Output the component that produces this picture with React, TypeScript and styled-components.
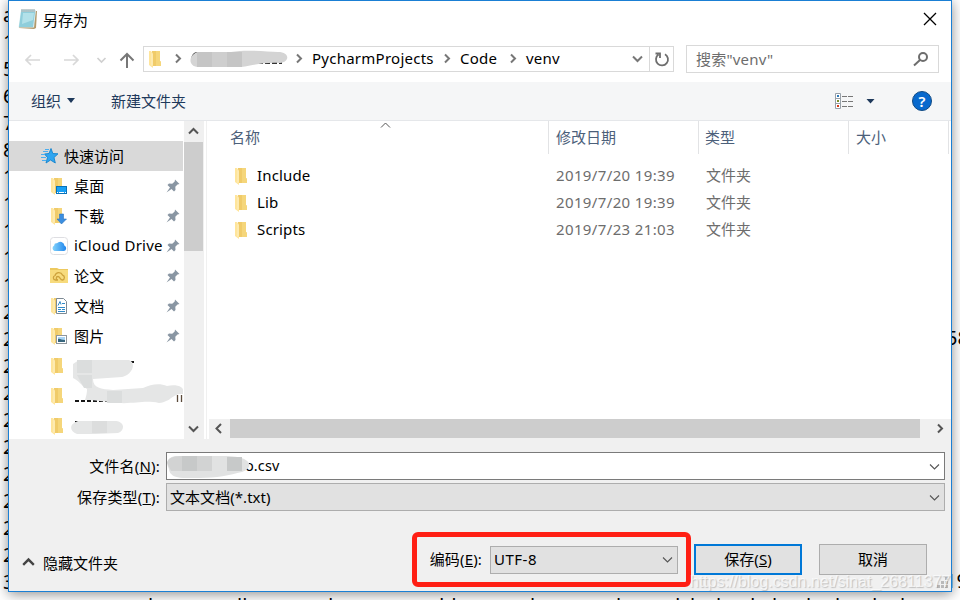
import React from "react";
import styled, { createGlobalStyle } from "styled-components";

const GlobalStyle = createGlobalStyle`
  * { box-sizing: border-box; }
  html, body { margin: 0; padding: 0; overflow: hidden; }
  body { font-family: "Noto Sans", "Noto Sans CJK SC", sans-serif; font-size: 15px; color: #000; }
  svg { display: block; flex: none; }
`;

const Desktop = styled.div`
  position: relative;
  width: 960px;
  height: 600px;
  padding-left: 8px;
  overflow: hidden;
  background: #fff;
`;

const Editor = styled.div`
  position: absolute;
  inset: 0;
  overflow: hidden;
  font: 20px/27px "Noto Sans", sans-serif;
`;

const EditorText = styled.span<{ $x: number; $y: number }>`
  position: absolute;
  left: ${(p) => p.$x}px;
  top: ${(p) => p.$y}px;
  white-space: pre;
`;

const Dialog = styled.main`
  position: relative;
  display: flex;
  flex-direction: column;
  width: 944px;
  height: 592px;
  border: 1px solid #1a7fd4;
  background: #f0f0f0;
  box-shadow: 0 2px 12px rgba(0, 0, 0, 0.45);
`;

const TitleBar = styled.header`
  display: flex;
  align-items: center;
  height: 36px;
  padding: 0 14px 0 9px;
  gap: 5px;
  background: #fff;
  & > svg:last-child { margin-left: auto; }
`;

const NavRow = styled.nav`
  display: flex;
  align-items: center;
  height: 45px;
  padding: 0 12px 1px 15px;
  background: #fff;
`;

const NavArrows = styled.div`
  display: flex;
  align-items: center;
  width: 119px;
`;

const AddressBar = styled.div`
  display: flex;
  align-items: center;
  width: 531px;
  height: 26px;
  margin-right: 12px;
  border: 1px solid #d9d9d9;
`;

const Crumbs = styled.div`
  display: flex;
  flex: 1;
  align-items: center;
  height: 100%;
  padding: 0 6px 1px 4px;
  & > svg:last-child { margin-left: auto; }
`;

const CrumbGap = styled.span<{ $w?: number }>`
  width: ${(p) => p.$w ?? 6}px;
`;

const Crumb = styled.span<{ $w: number }>`
  width: ${(p) => p.$w}px;
  margin-left: 7px;
  padding-bottom: 1px;
  white-space: nowrap;
  letter-spacing: 0.25px;
`;

const Refresh = styled.div`
  display: flex;
  align-items: center;
  justify-content: center;
  width: 24px;
  height: 100%;
  border-left: 1px solid #d9d9d9;
`;

const SearchBox = styled.div`
  display: flex;
  align-items: center;
  justify-content: space-between;
  width: 253px;
  height: 28px;
  padding: 0 9px 0 9px;
  border: 1px solid #d9d9d9;
  color: #6d6d6d;
`;

const SearchText = styled.span`
  padding-bottom: 2px;
  letter-spacing: 0.2px;
`;

const Toolbar = styled.div`
  display: flex;
  align-items: center;
  height: 39px;
  padding: 0 19px 0 22px;
  border-bottom: 1px solid #e5e7ea;
  background: #f5f6f7;
  color: #1e395b;
`;

const ToolItem = styled.span<{ $w: number }>`
  display: flex;
  align-items: center;
  gap: 6px;
  width: ${(p) => p.$w}px;
  padding-bottom: 2px;
  white-space: nowrap;
`;

const ToolIcons = styled.div`
  display: flex;
  align-items: center;
  margin-left: auto;
`;

const Browser = styled.section`
  display: flex;
  height: 318px;
  background: #fff;
`;

const Sidebar = styled.aside`
  width: 174px;
  height: 318px;
  padding-top: 20px;
  overflow: hidden;
`;

const SideItem = styled.div<{ $root?: boolean }>`
  display: flex;
  align-items: center;
  height: 30px;
  padding-left: ${(p) => (p.$root ? 31 : 41)}px;
  padding-right: 3px;
  background: ${(p) => (p.$root ? "#d9d9d9" : "transparent")};
  white-space: nowrap;
`;

const SideLabel = styled.span<{ $root?: boolean }>`
  flex: 1;
  margin-left: ${(p) => (p.$root ? 4 : 6)}px;
  padding-bottom: 2px;
  letter-spacing: ${(p) => (p.$root ? 0 : 0.25)}px;
`;

const VScroll = styled.div`
  display: flex;
  flex-direction: column;
  width: 20px;
  margin-left: 1px;
  background: #f0f0f0;
`;

const VArrow = styled.div`
  display: flex;
  align-items: center;
  justify-content: center;
  width: 19px;
  height: 21px;
`;

const VThumb = styled.div`
  width: 19px;
  height: 109px;
  margin-bottom: auto;
  background: #cdcdcd;
`;

const FilePane = styled.div`
  display: flex;
  flex: 1;
  flex-direction: column;
  margin-left: 2px;
  border-left: 1px solid #f0f0f0;
`;

const ColumnHeads = styled.div`
  display: flex;
  height: 33px;
  margin-bottom: 8px;
`;

const ColumnHead = styled.div<{ $w: number; $pad: number }>`
  position: relative;
  display: flex;
  align-items: center;
  width: ${(p) => p.$w}px;
  padding-left: ${(p) => p.$pad}px;
  padding-bottom: 2px;
  border-right: 1px solid #e2e3e5;
  color: #4c607a;
`;

const SortMark = styled.span`
  position: absolute;
  top: -1px;
  left: 173px;
`;

const FileRow = styled.div`
  display: grid;
  grid-template-columns: 50px 299px 150px 150px;
  align-items: center;
  height: 27px;
  color: #6d6d6d;
  & > svg { margin-left: 27px; }
  & > span { padding-bottom: 2px; }
`;

const FileName = styled.span`
  color: #000;
  letter-spacing: 0.15px;
`;

const FileDate = styled.span`
  letter-spacing: 0.37px;
`;

const HScroll = styled.div`
  display: flex;
  align-items: center;
  height: 20px;
  margin-top: auto;
  margin-left: 2px;
  padding: 0 0 1px 5px;
  background: #f0f0f0;
  & > svg:last-child { margin-left: 15px; }
`;

const HThumb = styled.div`
  width: 690px;
  height: 19px;
  margin-left: 5px;
  background: #cdcdcd;
`;

const Fields = styled.section`
  display: flex;
  flex-direction: column;
  gap: 3px;
  padding: 13px 6px 0 0;
`;

const Field = styled.div`
  display: flex;
  align-items: center;
`;

const FieldLabel = styled.label`
  width: 151px;
  margin-right: 6px;
  padding-bottom: 2px;
  text-align: right;
  letter-spacing: 0.2px;
`;

const Combo = styled.div<{ $w: number; $editable?: boolean }>`
  display: flex;
  align-items: center;
  justify-content: space-between;
  width: ${(p) => p.$w}px;
  height: 28px;
  padding: 0 4px 0 3px;
  border: 1px solid ${(p) => (p.$editable ? "#7a7a7a" : "#adadad")};
  background: ${(p) => (p.$editable ? "#fff" : "#e1e1e1")};
`;

const ComboText = styled.span`
  padding-bottom: 2px;
  letter-spacing: 0.05px;
`;

const UtfText = styled(ComboText)`
  letter-spacing: 0.5px;
`;

const FileField = styled.span`
  display: flex;
  align-items: center;
  margin-left: -3px;
  font-size: 14.5px;
`;

const FileSuffix = styled.span`
  margin-left: -5px;
  padding-bottom: 2px;
  letter-spacing: 0.1px;
`;

const NameSmudgeSvg = styled.svg`
  position: relative;
  z-index: 1;
`;

const Footer = styled.footer`
  display: flex;
  flex: 1;
  align-items: center;
  padding-top: 17px;
`;

const HideFolders = styled.div`
  display: flex;
  align-items: center;
  gap: 8px;
  width: 403px;
  padding: 5px 0 0 13px;
`;

const EncodingFrame = styled.div`
  display: flex;
  align-items: center;
  justify-content: flex-end;
  width: 279px;
  height: 55px;
  padding-right: 8px;
  border: 5px solid #ff1f14;
  border-radius: 6px;
`;

const EncodingLabel = styled.label`
  margin-right: 8px;
  padding-bottom: 2px;
  letter-spacing: 0.15px;
`;

const Button = styled.button<{ $primary?: boolean }>`
  width: 108px;
  height: 31px;
  margin-left: ${(p) => (p.$primary ? 3 : 17)}px;
  padding: 0 0 2px;
  border: ${(p) => (p.$primary ? "2px solid #0078d7" : "1px solid #adadad")};
  background: #e1e1e1;
  color: #000;
  font: inherit;
`;

const Watermark = styled.div`
  position: absolute;
  left: 690px;
  top: 572px;
  font: 16px/20px "Liberation Sans", sans-serif;
  color: rgba(255, 255, 255, 0.7);
  text-shadow: 1px 1px 1px rgba(120, 120, 120, 0.4);
  white-space: nowrap;
`;

const Grip = styled.svg`
  position: absolute;
  right: 3px;
  bottom: 2px;
`;

type Direction = "up" | "down" | "left" | "right";
const chevrons: Record<Direction, string> = {
  up: "M1 7.5 L5.5 3 L10 7.5",
  down: "M1 3.5 L5.5 8 L10 3.5",
  left: "M7 1 L2.5 5.5 L7 10",
  right: "M3 1.5 L7 5.5 L3 9.5",
};

function Chevron({ dir, color = "#555", weight = 2, size = 11 }: { dir: Direction; color?: string; weight?: number; size?: number }) {
  return (
    <svg width={size} height={size} viewBox="0 0 11 11" fill="none" stroke={color} strokeWidth={weight}>
      <path d={chevrons[dir]} />
    </svg>
  );
}

type Overlay = "desktop" | "download" | "document" | "picture";

function Folder({ overlay, width = 18 }: { overlay?: Overlay; width?: number }) {
  return (
    <svg width={width} height="18" viewBox={`0 0 ${width} 18`}>
      <path d="M4 1h8v10l1 1v4H5z" fill="#f0cb69" />
      <path d="M8 1h4v10l1 1v4H8z" fill="#f5d67b" />
      <path d="M1 1h2l2 3v14l-4-3z" fill="#ffe59b" />
      <path d="M2 1l3 3v11l-2 1V3z" fill="#fdeab0" />
      {overlay === "desktop" && (
        <g>
          <rect x="6.5" y="9.5" width="10" height="7" fill="#18a0f5" stroke="#0871b8" />
          <path d="M7 15.500h1m1 0h5m1 0h1" stroke="#fff" strokeWidth="1" />
        </g>
      )}
      {overlay === "download" && <path d="M9.500 7h4v5h3L11.500 17 7 12h2.500z" fill="#3b8ee0" stroke="#2d73be" strokeWidth=".6" />}
      {overlay === "document" && (
        <g>
          <path d="M6.500 1.500h7l3 3v12h-10z" fill="#fff" stroke="#7d8a94" />
          <path d="M8 8.500l2-4 1 3m1-1h3M8 10.500h7M8 12.500h3m1 0h3M8 14.500h7" fill="none" stroke="#318ac7" />
        </g>
      )}
      {overlay === "picture" && (
        <g>
          <rect x="6.500" y="8.500" width="10" height="8" fill="#fff" stroke="#8e979d" />
          <path d="M8 10h7v5H8z" fill="#a9d5f6" />
          <path d="M8 12c2-1 3 1 7 1v2H8z" fill="#37667d" />
        </g>
      )}
    </svg>
  );
}

function PaperFolder() {
  return (
    <svg width="18" height="18" viewBox="0 0 18 18">
      <path d="M0 1h7l2 1h9v14H0z" fill="#edc95f" />
      <path d="M0 3h18v13H0z" fill="#f7db7d" />
      <path d="M7.500 13H5.500a2.300 2.300 0 0 1-.5-4.500 4 4 0 0 1 7.500-.5 2.600 2.600 0 0 1 0 5C10 13 10 9.500 8 9.500a1.700 1.700 0 0 0 0 3.500" fill="none" stroke="#cda23c" strokeWidth="1.300" />
    </svg>
  );
}

function CloudIcon() {
  return (
    <svg width="18" height="18" viewBox="0 0 18 18">
      <defs>
        <linearGradient id="cloud" x1="0" x2="1">
          <stop stopColor="#83d3fb" />
          <stop offset="1" stopColor="#2086ed" />
        </linearGradient>
      </defs>
      <rect x=".5" y=".5" width="17" height="17" rx="3" fill="#fff" stroke="#dedee2" />
      <path d="M4.500 14a3 3 0 0 1-.3-5.500A2.300 2.300 0 0 1 7 6.300a4.200 4.200 0 0 1 7.500 2.400A2.800 2.800 0 0 1 14 14z" fill="url(#cloud)" />
    </svg>
  );
}

function StarIcon() {
  return (
    <svg width="20" height="18" viewBox="0 0 20 18">
      <path d="M11 1.500l1.800 5 5.200.3-4 3.700 1.300 5.500-4.800-3L6 16l1.500-5.500L4.500 7l4.500-.5z" fill="#2fa5f0" stroke="#1483cd" strokeWidth=".9" />
      <path d="M3 4.500h5M1 7.500h4M1 10.500h5M2 13.500h4M5 2.500h4" stroke="#4aaef0" />
    </svg>
  );
}

function Pin() {
  return (
    <svg width="14" height="14" viewBox="0 0 14 14">
      <path d="M9 .5L13.500 5l-2 .5-2.200 2.300.2 3.200L8 12.500 5.500 10 .5 13.500 4 8.500 1.500 6 3 4.600l3.200.2 2.500-2.300z" fill="#8996a3" />
    </svg>
  );
}

function Notepad() {
  return (
    <svg width="20" height="22" viewBox="0 0 20 22">
      <path d="M4 3h15l-1 17-2 1-15-1z" fill="#b39a6c" />
      <path d="M3 2h15l-2 17.500H.500z" fill="#d9edf1" />
      <path d="M3 4h14l-2 15H1z" fill="#8fcedb" />
      <path d="M5 5h11l-1 7L4 16z" fill="#b2e1e9" />
      <path d="M4 1v3m2-3v3m2-3v3m2-3v3m2-3v3m2-3v3m2-3v3" stroke="#6b858a" strokeWidth=".8" />
    </svg>
  );
}

/* Smudged strokes that hide part of a folder or file name. */
function AddressSmudge() {
  return (
    <svg width="98" height="20" viewBox="0 0 98 20">
      <path d="M2 9Q3 4 7 4" fill="none" stroke="#111" strokeWidth="1.300" />
      <path d="M68 14h24" stroke="#333" strokeWidth="2" strokeDasharray="5 2" />
      <path d="M8 3h33C58 0 77 3 88 3c12 0 12 10 2 11-16-1-25 2-39 4H8C-3 17-1 5 8 3z" fill="#d4d4d4" />
      <path d="M7 3h15v15H7zM37 3h15v15H37z" fill="#c5c5c5" />
      <path d="M22 3h15v15H22z" fill="#cecece" />
    </svg>
  );
}

function NameSmudge() {
  return (
    <NameSmudgeSvg width="83" height="26" viewBox="0 0 83 26">
      <path d="M8 3h50c28 0 29 12 17 16-12 3-26 6-42 6H16C0 24 3 16 1 14-1 8 2 4 8 3z" fill="#e1e2e2" />
      <path d="M15 3h15v15H15zM60 4h15v14H60z" fill="#c7c9c9" />
      <path d="M0 10Q1 3 15 3v15H4zM30 3h15v15H30z" fill="#d2d3d3" />
    </NameSmudgeSvg>
  );
}

const SmudgeLayer = styled.svg`
  position: absolute;
  left: 62px;
  top: 357px;
`;

function SidebarSmudges() {
  return (
    <SmudgeLayer width="112" height="80" viewBox="0 0 112 80">
      <path d="M59 4h4M4 43h40M4 64h6" stroke="#161616" strokeWidth="2" strokeDasharray="4 2" />
      <path d="M106.500 37v7M110.500 37v7" stroke="#5b4a3a" strokeWidth="1.300" />
      <path d="M8 2h50c8 3 3 15-7 17l-29 2c0 9 8 10 20 11l30-2c8-4 17-5 24-2 10-2 16 1 16 4v4c-11-1-10 7-24 9-15-3-23 1-41 0-12-1-20-3-33-3 2-6 2-9 2-11C10 27 7 22 2 20V6z" fill="#e5e6e6" />
      <path d="M6 2h15v13H6zm0 15h15v13H13zM36 33h15v12H36z" fill="#dbdddd" />
      <path d="M7 63h38c9 1 9 10 2 12-15 1-32 1-41 1-8-3-8-10 1-13z" fill="#e5e6e6" />
      <path d="M21 63h15v12H21z" fill="#dcdddd" />
    </SmudgeLayer>
  );
}

const editorLines = ["a", "1", "5", "6", "7", "8", "1", "1", "1", "1", "1", "2", "2", "2", "2", "2", "2", "2", "2", "2", "2", "3"];
const editorWords: [number, string][] = [
  [148, "h"], [237, "ll"], [321, "d"], [432, "dd"], [530, "b"], [616, "h"],
  [668, "d"], [690, "h"], [716, "b"], [743, "d"], [772, "h"], [806, "b"], [835, "l"], [865, "d"], [900, "h"],
];
const files = [
  ["Include", "2019/7/20 19:39"],
  ["Lib", "2019/7/20 19:39"],
  ["Scripts", "2019/7/23 21:03"],
];
const places: { label: string; icon: React.ReactNode }[] = [
  { label: "桌面", icon: <Folder overlay="desktop" /> },
  { label: "下载", icon: <Folder overlay="download" /> },
  { label: "iCloud Drive", icon: <CloudIcon /> },
  { label: "论文", icon: <PaperFolder /> },
  { label: "文档", icon: <Folder overlay="document" /> },
  { label: "图片", icon: <Folder overlay="picture" /> },
];

export default function App() {
  return (
    <>
      <GlobalStyle />
      <Desktop>
        <Editor>
          {editorLines.map((t, i) => <EditorText key={i} $x={3} $y={1 + i * 27}>{t}</EditorText>)}
          <EditorText $x={946} $y={324}>58</EditorText>
          <EditorText $x={945} $y={567}>19</EditorText>
          {[213, 629, 695].map((x) => <EditorText key={x} $x={x} $y={566}>g</EditorText>)}
          {editorWords.map(([x, word]) => <EditorText key={x} $x={x} $y={592}>{word}</EditorText>)}
        </Editor>
        <Dialog>
          <TitleBar>
            <Notepad />
            <span>另存为</span>
            <svg width="14" height="14" viewBox="0 0 14 14" stroke="#000" strokeWidth="1.300"><path d="M1 1l12 12M13 1L1 13" /></svg>
          </TitleBar>
          <NavRow>
            <NavArrows>
              <svg width="112" height="20" viewBox="0 0 112 20" fill="none" strokeWidth="1.700">
                <path d="M16 11H2M7 6l-5 5 5 5M40 11h14M49 6l5 5-5 5" stroke="#d8d8d8" />
                <path d="M73.500 9l4 4 4-4" stroke="#d0d0d0" />
                <path d="M103 19V5M96.500 11.500L103 5l6.500 6.500" stroke="#777" strokeWidth="2" />
              </svg>
            </NavArrows>
            <AddressBar>
              <Crumbs>
                <Folder />
                <CrumbGap $w={7} />
                <Chevron dir="right" color="#777" />
                <CrumbGap />
                <AddressSmudge />
                <CrumbGap />
                <Chevron dir="right" color="#777" />
                <Crumb $w={130}>PycharmProjects</Crumb>
                <Chevron dir="right" color="#777" />
                <Crumb $w={48}>Code</Crumb>
                <Chevron dir="right" color="#777" />
                <Crumb $w={50}>venv</Crumb>
                <Chevron dir="down" color="#777" />
              </Crumbs>
              <Refresh>
                <svg width="16" height="16" viewBox="0 0 16 16" fill="none" stroke="#6e6e6e" strokeWidth="1.800"><path d="M11 3.200A6 6 0 1 1 4.500 3.500M1.500 2.500h4.500v4.500" /></svg>
              </Refresh>
            </AddressBar>
            <SearchBox>
              <SearchText>搜索"venv"</SearchText>
              <svg width="16" height="16" viewBox="0 0 16 16" fill="none" stroke="#6d6d6d" strokeWidth="2"><circle cx="10" cy="6" r="4" /><path d="M7 9l-6 5.500" /></svg>
            </SearchBox>
          </NavRow>
          <Toolbar>
            <ToolItem $w={80}>组织<svg width="8" height="5" viewBox="0 0 8 5"><path d="M0 0h8L4 5z" fill="#1e395b" /></svg></ToolItem>
            <ToolItem $w={90}>新建文件夹</ToolItem>
            <ToolIcons>
              <svg width="77" height="20" viewBox="0 0 77 20">
                <path d="M.500 2.500h5v15h-5zM.500 7.500h5M.500 12.500h5" fill="#fff" stroke="#98a0a8" />
                <path d="M2 4h2v2H2z" fill="#2d7aba" /><path d="M2 9h2v2H2z" fill="#7b8f2b" /><path d="M2 14h2v2H2z" fill="#d63a16" />
                <path d="M7 5.500h5m1 0h5M7 10.500h5m1 0h5M7 15.500h5m1 0h5" stroke="#777" />
                <path d="M31.500 8h8l-4 4.500z" fill="#1e395b" />
              </svg>
              <svg width="20" height="20" viewBox="0 0 20 20"><circle cx="10" cy="10" r="9.500" fill="#0869cd" stroke="#114a83" /><text x="10" y="15.500" textAnchor="middle" fill="#fff" fontSize="15" fontWeight="600">?</text></svg>
            </ToolIcons>
          </Toolbar>
          <Browser>
            <Sidebar>
              <SideItem $root><StarIcon /><SideLabel $root>快速访问</SideLabel></SideItem>
              {places.map((p) => <SideItem key={p.label}>{p.icon}<SideLabel>{p.label}</SideLabel><Pin /></SideItem>)}
              {[0, 1, 2].map((i) => <SideItem key={i}><Folder /></SideItem>)}
            </Sidebar>
            <VScroll>
              <VArrow><Chevron dir="up" /></VArrow><VThumb /><VArrow><Chevron dir="down" /></VArrow>
            </VScroll>
            <FilePane>
              <ColumnHeads>
                <ColumnHead $w={342} $pad={23}>名称<SortMark><Chevron dir="up" weight={1} /></SortMark></ColumnHead>
                <ColumnHead $w={150} $pad={7}>修改日期</ColumnHead>
                <ColumnHead $w={150} $pad={6}>类型</ColumnHead>
                <ColumnHead $w={100} $pad={7}>大小</ColumnHead>
              </ColumnHeads>
              {files.map(([name, date]) => (
                <FileRow key={name}><Folder /><FileName>{name}</FileName><FileDate>{date}</FileDate><span>文件夹</span></FileRow>
              ))}
              <HScroll><Chevron dir="left" /><HThumb /><Chevron dir="right" /></HScroll>
            </FilePane>
          </Browser>
          <SidebarSmudges />
          <Fields>
            <Field>
              <FieldLabel>文件名(<u>N</u>):</FieldLabel>
              <Combo $w={779} $editable><FileField><NameSmudge /><FileSuffix>o.csv</FileSuffix></FileField><Chevron dir="down" weight={1.1} /></Combo>
            </Field>
            <Field>
              <FieldLabel>保存类型(<u>T</u>):</FieldLabel>
              <Combo $w={779}><ComboText>文本文档(*.txt)</ComboText><Chevron dir="down" weight={1.1} /></Combo>
            </Field>
          </Fields>
          <Footer>
            <HideFolders><Chevron dir="up" color="#444" size={13} />隐藏文件夹</HideFolders>
            <EncodingFrame>
              <EncodingLabel>编码(<u>E</u>):</EncodingLabel>
              <Combo $w={188}><UtfText>UTF-8</UtfText><Chevron dir="down" weight={1.1} /></Combo>
            </EncodingFrame>
            <Button $primary>保存(<u>S</u>)</Button>
            <Button>取消</Button>
          </Footer>
          <Grip width="12" height="12" viewBox="0 0 12 12"><path d="M9 0h3v3H9zM5 4h3v3H5zM9 4h3v3H9zM1 8h3v3H1zM5 8h3v3H5zM9 8h3v3H9z" fill="#b9b9b9" /></Grip>
        </Dialog>
        <Watermark>https://blog.csdn.net/sinat_26811377</Watermark>
      </Desktop>
    </>
  );
}
